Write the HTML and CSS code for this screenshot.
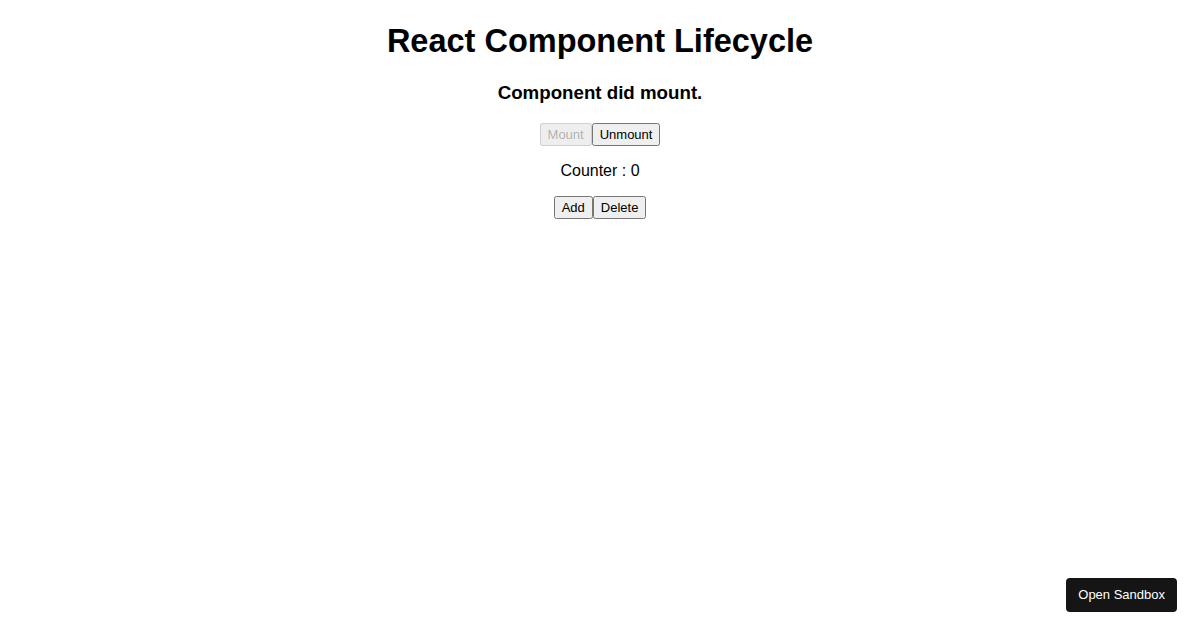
FILE: index.html
```html
<!DOCTYPE html>
<html>
<head>
<meta charset="utf-8">
<link rel="stylesheet" href="styles.css">
</head>
<body>
<div class="app">
  <h1>React Component Lifecycle</h1>
  <h3>Component did mount.</h3>
  <div class="controls first">
    <button class="btn" disabled>Mount</button><button class="btn">Unmount</button>
  </div>
  <p class="counter">Counter : 0</p>
  <div class="controls">
    <button class="btn">Add</button><button class="btn">Delete</button>
  </div>
</div>
<a class="sandbox">Open Sandbox</a>
</body>
</html>
```
FILE: styles.css
```css
body {
  margin: 0 8px;
  padding-top: 2px;
  font-family: "Liberation Sans", Arial, sans-serif;
  background: #fff;
  color: #000;
}
.app {
  text-align: center;
}
h1 {
  font-size: 32.5px;
  margin: 21.44px 0;
}
h3 {
  font-size: 18.72px;
  margin: 18.72px 0;
}
.controls {
  font-size: 16px;
}
.controls.first {
  margin-top: 2px;
}
.btn {
  font-family: "Liberation Sans", Arial, sans-serif;
  font-size: 13px;
  padding: 2px 6px;
}
.counter {
  margin: 16px 0;
}
.sandbox {
  position: fixed;
  right: 23px;
  bottom: 18px;
  background: #151515;
  color: #fff;
  font-size: 13px;
  border-radius: 4px;
  padding: 9px 12px;
  line-height: 16px;
}
```
